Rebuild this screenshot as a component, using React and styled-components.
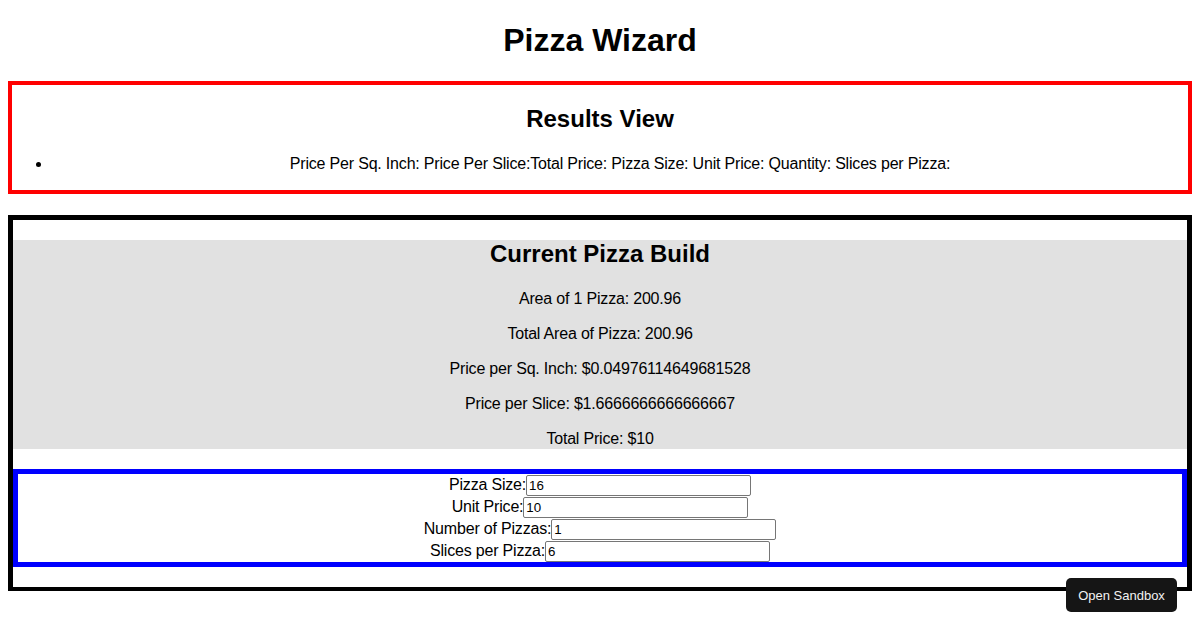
import React, { useState } from 'react';
import styled, { createGlobalStyle } from 'styled-components';

const GlobalStyle = createGlobalStyle`
  body {
    margin: 0 8px 8px;
    font-family: 'Liberation Sans', Arial, sans-serif;
    line-height: 1.2;
    color: #000;
    background: #fff;
  }
`;

const Page = styled.div`
  text-align: center;
`;

const Title = styled.h1`
  font-size: 32px;
  margin: 21.44px 0;
`;

const ResultsBox = styled.section`
  border: 4px solid red;
`;

const SectionTitle = styled.h2`
  font-size: 24px;
  margin: 19.92px 0;
`;

const ResultsList = styled.ul`
  margin: 16px 0 17px;
  padding-left: 40px;
  letter-spacing: -0.19px;
`;

const BuildBox = styled.section`
  margin-top: 21px;
  border: 5px solid #000;
  border-bottom-width: 4px;
`;

const Summary = styled.div`
  background: #e1e1e1;
`;

const Line = styled.p`
  margin: 16px 0;
  font-size: 16px;
  letter-spacing: -0.19px;
`;

const InputsBox = styled.form`
  margin: 20px 0;
  border: 5px solid blue;
`;

const Field = styled.div`
  height: 22px;
  line-height: 22px;
  font-size: 16px;
  letter-spacing: -0.19px;
`;

const NumberInput = styled.input`
  box-sizing: border-box;
  width: 225px;
  height: 21px;
  padding: 1px 2px;
  border: 1px solid #767676;
  border-radius: 2px;
  font-family: 'Liberation Sans', Arial, sans-serif;
  font-size: 13.33px;
  letter-spacing: normal;
  vertical-align: middle;
`;

const SandboxButton = styled.button`
  position: fixed;
  right: 23px;
  bottom: 18px;
  width: 111px;
  height: 34px;
  border: none;
  border-radius: 5px;
  background: #151515;
  color: #f2f2f2;
  font-family: 'Liberation Sans', Arial, sans-serif;
  font-size: 13px;
  cursor: pointer;
`;

const fields = [
  { key: 'size', label: 'Pizza Size:' },
  { key: 'price', label: 'Unit Price:' },
  { key: 'qty', label: 'Number of Pizzas:' },
  { key: 'slices', label: 'Slices per Pizza:' },
];

export default function App() {
  const [build, setBuild] = useState({ size: 16, price: 10, qty: 1, slices: 6 });

  const radius = build.size / 2;
  const area = Math.round(3.14 * radius * radius * 100) / 100;
  const totalArea = area * build.qty;
  const totalPrice = build.price * build.qty;
  const perSqInch = totalPrice / totalArea;
  const perSlice = totalPrice / (build.slices * build.qty);

  const update = key => e => setBuild({ ...build, [key]: Number(e.target.value) });

  return (
    <Page>
      <GlobalStyle />
      <Title>Pizza Wizard</Title>
      <ResultsBox>
        <SectionTitle>Results View</SectionTitle>
        <ResultsList>
          <li>
            Price Per Sq. Inch: Price Per Slice:Total Price: Pizza Size: Unit Price: Quantity: Slices per Pizza:
          </li>
        </ResultsList>
      </ResultsBox>
      <BuildBox>
        <Summary>
          <SectionTitle>Current Pizza Build</SectionTitle>
          <Line>Area of 1 Pizza: {area}</Line>
          <Line>Total Area of Pizza: {totalArea}</Line>
          <Line>Price per Sq. Inch: ${perSqInch}</Line>
          <Line>Price per Slice: ${perSlice}</Line>
          <Line>Total Price: ${totalPrice}</Line>
        </Summary>
        <InputsBox onSubmit={e => e.preventDefault()}>
          {fields.map(f => (
            <Field key={f.key}>
              {f.label}
              <NumberInput value={build[f.key]} onChange={update(f.key)} />
            </Field>
          ))}
        </InputsBox>
      </BuildBox>
      <SandboxButton>Open Sandbox</SandboxButton>
    </Page>
  );
}
